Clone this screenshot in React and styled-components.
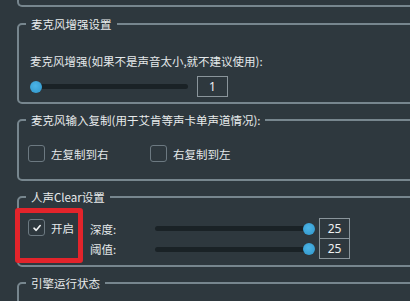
import React from 'react';
import styled, { createGlobalStyle } from 'styled-components';

const GlobalStyle = createGlobalStyle`
  html, body {
    margin: 0;
    padding: 0;
    background: #2e383e;
    overflow: hidden;
  }
  body {
    font-family: "Noto Sans CJK SC", "Noto Sans", sans-serif;
    color: #e4e8ea;
  }
`;

const Page = styled.div`
  position: relative;
  width: 410px;
  height: 301px;
  overflow: hidden;
  padding-left: 17px;
  box-sizing: border-box;
  display: flex;
  flex-direction: column;
`;

const TopGroup = styled.div`
  flex-shrink: 0;
  height: 7px;
  margin-right: -12px;
  box-sizing: border-box;
  border: 2px solid #77868e;
  border-top: none;
  border-radius: 0 0 5px 5px;
`;

const Group = styled.fieldset`
  margin: ${({ $mt }) => $mt}px -12px 0 0;
  height: ${({ $h }) => $h}px;
  box-sizing: border-box;
  border: 2px solid #77868e;
  border-radius: 5px;
  padding: 0;
  min-width: 0;
  flex-shrink: 0;
`;

const Legend = styled.legend`
  font-size: 11.5px;
  line-height: 16px;
  padding: 0 5px;
  margin-left: 7px;
  color: #e8ebec;
`;

const Content = styled.div`
  padding: ${({ $pt }) => $pt}px 0 0 ${({ $pl }) => $pl}px;
  display: flex;
  flex-direction: ${({ $row }) => ($row ? 'row' : 'column')};
  align-items: flex-start;
`;

const Label = styled.div`
  font-size: 11.5px;
  line-height: 16px;
  white-space: nowrap;
`;

const SliderRow = styled.div`
  margin-top: 7px;
  display: flex;
  align-items: center;
  gap: 9px;
`;

const Track = styled.div`
  position: relative;
  width: ${({ $w }) => $w}px;
  height: 5px;
  border-radius: 3px;
  background: #1a2226;
`;

const Handle = styled.div`
  position: absolute;
  top: 50%;
  left: ${({ $v }) => $v}%;
  width: 12px;
  height: 12px;
  border-radius: 50%;
  background: radial-gradient(circle at 45% 40%, #4cb4e6, #2f95c9);
  transform: translate(-${({ $v }) => $v}%, -50%);
`;

const Slider = ({ width, value }) => (
  <Track $w={width}>
    <Handle $v={value} />
  </Track>
);

const Spin = styled.div`
  width: 31px;
  height: ${({ $joined }) => ($joined ? 20 : 21)}px;
  box-sizing: border-box;
  border: 1.5px solid #8a959b;
  border-top: ${({ $joined }) => ($joined ? 'none' : '1.5px solid #8a959b')};
  display: flex;
  align-items: center;
  justify-content: center;
  font-family: "Noto Sans", sans-serif;
  font-size: 12px;
  color: #eef0f1;
`;

const CheckItem = styled.label`
  display: flex;
  align-items: center;
  gap: 6px;
  width: ${({ $w }) => $w}px;
  margin-top: ${({ $mt }) => $mt || 0}px;
  font-size: 11.5px;
  line-height: 16px;
`;

const Box = styled.span`
  width: 17px;
  height: 17px;
  box-sizing: border-box;
  border: 1.5px solid #6c7981;
  border-radius: 3px;
  display: flex;
  align-items: center;
  justify-content: center;
`;

const Check = ({ checked, children, width, mt }) => (
  <CheckItem $w={width} $mt={mt}>
    <Box>
      {checked && (
        <svg width="10" height="10" viewBox="0 0 10 10">
          <path d="M2 5.2 L4.2 7.3 L8.2 2.6" fill="none" stroke="#f2f4f5" strokeWidth="1.6" strokeLinecap="round" strokeLinejoin="round" />
        </svg>
      )}
    </Box>
    {children}
  </CheckItem>
);

const ClearGrid = styled.div`
  margin-top: 13px;
  display: grid;
  grid-template-columns: 61px 160px 31px;
  column-gap: 4px;
  align-items: center;
`;

const Marker = styled.div`
  position: absolute;
  left: 15px;
  top: 208px;
  width: 68px;
  height: 55px;
  box-sizing: border-box;
  border: 5.5px solid #e3242b;
  border-radius: 3px;
`;

export default function App() {
  return (
    <>
      <GlobalStyle />
      <Page>
        <TopGroup />
        <Group $mt={9} $h={88}>
          <Legend>麦克风增强设置</Legend>
          <Content $pt={21} $pl={11}>
            <Label>麦克风增强(如果不是声音太小,就不建议使用):</Label>
            <SliderRow>
              <Slider width={158} value={0} />
              <Spin>1</Spin>
            </SliderRow>
          </Content>
        </Group>
        <Group $mt={8} $h={69}>
          <Legend>麦克风输入复制(用于艾肯等声卡单声道情况):</Legend>
          <Content $pt={17} $pl={9} $row>
            <Check width={122}>左复制到右</Check>
            <Check width={100}>右复制到左</Check>
          </Content>
        </Group>
        <Group $mt={8} $h={78}>
          <Legend>人声Clear设置</Legend>
          <Content $pt={0} $pl={9} $row>
            <Check width={62} mt={14} checked>开启</Check>
            <ClearGrid>
              <Label>深度:</Label>
              <Slider width={160} value={100} />
              <Spin>25</Spin>
              <Label>阈值:</Label>
              <Slider width={160} value={100} />
              <Spin $joined>25</Spin>
            </ClearGrid>
          </Content>
        </Group>
        <Group $mt={8} $h={60}>
          <Legend>引擎运行状态</Legend>
        </Group>
        <Marker />
      </Page>
    </>
  );
}
